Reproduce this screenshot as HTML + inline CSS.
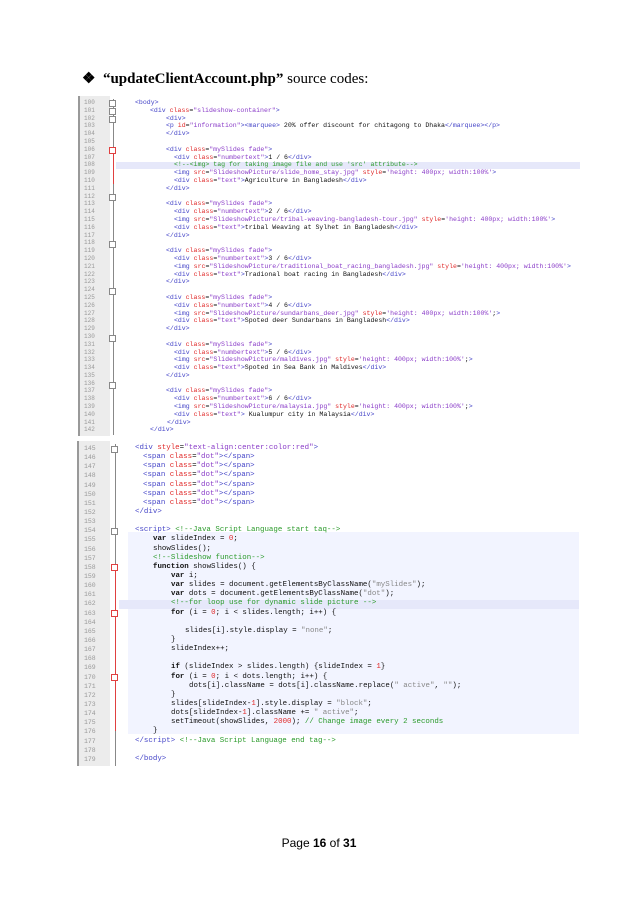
<!DOCTYPE html>
<html><head><meta charset="utf-8"><style>
body{margin:0;width:638px;height:902px;background:#fff;position:relative;overflow:hidden}
.h{position:absolute;left:82px;top:69px;font:bold 15px "Liberation Serif",serif;color:#000}
.pg{position:absolute;left:0;width:638px;top:836px;text-align:center;font:12px "Liberation Sans",sans-serif;color:#000}
.blk{position:absolute;font-family:"Liberation Mono",monospace;white-space:normal;color:#111}
.b1{left:78px;top:99px;width:502px;height:337px;font-size:6.55px;line-height:7.81px}
.b2{left:77px;top:444px;width:502px;height:322px;font-size:7.45px;line-height:9.15px}
.gut{position:absolute;top:-3px;bottom:0;left:0;width:30px;background:#ececec;border-left:2px solid #999}
.b2 .gut{width:31px}
.vl{position:absolute;width:1px;background:#888}
.rl{position:absolute;width:1px;background:#e04040}
.lines{position:absolute;left:0;top:0;right:0}
.L{position:relative;height:7.81px;overflow:visible}
.b2 .L{height:9.15px}
.n{position:absolute;left:6px;color:#999;font-size:6px;white-space:pre}
.b2 .n{left:7px;font-size:6.5px}
.c0{position:absolute;white-space:pre;top:0}
.t{color:#4646c8}.a{color:#e02a2a}.s{color:#8a3cc8}.c{color:#2a9a2a}.k{font-weight:bold;color:#111}.m{color:#e02a2a}.q{color:#888}
.hl{background:#e6e8fa}
.sb{position:absolute;left:51px;right:0;background:#f2f4ff}
.fb{position:absolute;width:5px;height:5px;border:1px solid #888;background:#fff}
.fr{border-color:#e04040}
</style></head><body>
<div class="h">❖&nbsp; “updateClientAccount.php” <span style="font-weight:normal">source codes:</span></div>

<div class="blk b1">
<div class="gut"></div>
<div class="hl" style="position:absolute;left:38px;right:0;top:62.5px;height:7.8px"></div>
<div class="vl" style="left:35px;top:0;height:336px"></div>
<div class="rl" style="left:35px;top:55px;height:30px"></div>
<div class="fb" style="left:31px;top:1px"></div><div class="fb" style="left:31px;top:9px"></div><div class="fb" style="left:31px;top:17px"></div>
<div class="fb fr" style="left:31px;top:48px"></div><div class="fb" style="left:31px;top:95px"></div><div class="fb" style="left:31px;top:142px"></div><div class="fb" style="left:31px;top:189px"></div><div class="fb" style="left:31px;top:236px"></div><div class="fb" style="left:31px;top:283px"></div>
<div class="lines">
<div class="L"><span class="n">100</span><span class="c0" style="left:57px"><span class="t">&lt;body&gt;</span></span></div>
<div class="L"><span class="n">101</span><span class="c0" style="left:72px"><span class="t">&lt;div</span> <span class="a">class</span>=<span class="s">"slideshow-container"</span><span class="t">&gt;</span></span></div>
<div class="L"><span class="n">102</span><span class="c0" style="left:88px"><span class="t">&lt;div&gt;</span></span></div>
<div class="L"><span class="n">103</span><span class="c0" style="left:88px"><span class="t">&lt;p</span> <span class="a">id</span>=<span class="s">"information"</span><span class="t">&gt;&lt;marquee&gt;</span> 20% offer discount for chitagong to Dhaka<span class="t">&lt;/marquee&gt;&lt;/p&gt;</span></span></div>
<div class="L"><span class="n">104</span><span class="c0" style="left:88px"><span class="t">&lt;/div&gt;</span></span></div>
<div class="L"><span class="n">105</span></div>
<div class="L"><span class="n">106</span><span class="c0" style="left:88px"><span class="t">&lt;div</span> <span class="a">class</span>=<span class="s">"mySlides fade"</span><span class="t">&gt;</span></span></div>
<div class="L"><span class="n">107</span><span class="c0" style="left:96px"><span class="t">&lt;div</span> <span class="a">class</span>=<span class="s">"numbertext"</span><span class="t">&gt;</span>1 / 6<span class="t">&lt;/div&gt;</span></span></div>
<div class="L"><span class="n">108</span><span class="c0 c" style="left:96px">&lt;!--&lt;img&gt; tag for taking image file and use 'src' attribute--&gt;</span></div>
<div class="L"><span class="n">109</span><span class="c0" style="left:96px"><span class="t">&lt;img</span> <span class="a">src</span>=<span class="s">"SlideshowPicture/slide_home_stay.jpg"</span> <span class="a">style</span>=<span class="s">'height: 400px; width:100%'</span><span class="t">&gt;</span></span></div>
<div class="L"><span class="n">110</span><span class="c0" style="left:96px"><span class="t">&lt;div</span> <span class="a">class</span>=<span class="s">"text"</span><span class="t">&gt;</span>Agriculture in Bangladesh<span class="t">&lt;/div&gt;</span></span></div>
<div class="L"><span class="n">111</span><span class="c0" style="left:88px"><span class="t">&lt;/div&gt;</span></span></div>
<div class="L"><span class="n">112</span></div>
<div class="L"><span class="n">113</span><span class="c0" style="left:88px"><span class="t">&lt;div</span> <span class="a">class</span>=<span class="s">"mySlides fade"</span><span class="t">&gt;</span></span></div>
<div class="L"><span class="n">114</span><span class="c0" style="left:96px"><span class="t">&lt;div</span> <span class="a">class</span>=<span class="s">"numbertext"</span><span class="t">&gt;</span>2 / 6<span class="t">&lt;/div&gt;</span></span></div>
<div class="L"><span class="n">115</span><span class="c0" style="left:96px"><span class="t">&lt;img</span> <span class="a">src</span>=<span class="s">"SlideshowPicture/tribal-weaving-bangladesh-tour.jpg"</span> <span class="a">style</span>=<span class="s">'height: 400px; width:100%'</span><span class="t">&gt;</span></span></div>
<div class="L"><span class="n">116</span><span class="c0" style="left:96px"><span class="t">&lt;div</span> <span class="a">class</span>=<span class="s">"text"</span><span class="t">&gt;</span>tribal Weaving at Sylhet in Bangladesh<span class="t">&lt;/div&gt;</span></span></div>
<div class="L"><span class="n">117</span><span class="c0" style="left:88px"><span class="t">&lt;/div&gt;</span></span></div>
<div class="L"><span class="n">118</span></div>
<div class="L"><span class="n">119</span><span class="c0" style="left:88px"><span class="t">&lt;div</span> <span class="a">class</span>=<span class="s">"mySlides fade"</span><span class="t">&gt;</span></span></div>
<div class="L"><span class="n">120</span><span class="c0" style="left:96px"><span class="t">&lt;div</span> <span class="a">class</span>=<span class="s">"numbertext"</span><span class="t">&gt;</span>3 / 6<span class="t">&lt;/div&gt;</span></span></div>
<div class="L"><span class="n">121</span><span class="c0" style="left:96px"><span class="t">&lt;img</span> <span class="a">src</span>=<span class="s">"SlideshowPicture/traditional_boat_racing_bangladesh.jpg"</span> <span class="a">style</span>=<span class="s">'height: 400px; width:100%'</span><span class="t">&gt;</span></span></div>
<div class="L"><span class="n">122</span><span class="c0" style="left:96px"><span class="t">&lt;div</span> <span class="a">class</span>=<span class="s">"text"</span><span class="t">&gt;</span>Tradional boat racing in Bangladesh<span class="t">&lt;/div&gt;</span></span></div>
<div class="L"><span class="n">123</span><span class="c0" style="left:88px"><span class="t">&lt;/div&gt;</span></span></div>
<div class="L"><span class="n">124</span></div>
<div class="L"><span class="n">125</span><span class="c0" style="left:88px"><span class="t">&lt;div</span> <span class="a">class</span>=<span class="s">"mySlides fade"</span><span class="t">&gt;</span></span></div>
<div class="L"><span class="n">126</span><span class="c0" style="left:96px"><span class="t">&lt;div</span> <span class="a">class</span>=<span class="s">"numbertext"</span><span class="t">&gt;</span>4 / 6<span class="t">&lt;/div&gt;</span></span></div>
<div class="L"><span class="n">127</span><span class="c0" style="left:96px"><span class="t">&lt;img</span> <span class="a">src</span>=<span class="s">"SlideshowPicture/sundarbans_deer.jpg"</span> <span class="a">style</span>=<span class="s">'height: 400px; width:100%'</span>;<span class="t">&gt;</span></span></div>
<div class="L"><span class="n">128</span><span class="c0" style="left:96px"><span class="t">&lt;div</span> <span class="a">class</span>=<span class="s">"text"</span><span class="t">&gt;</span>Spoted deer Sundarbans in Bangladesh<span class="t">&lt;/div&gt;</span></span></div>
<div class="L"><span class="n">129</span><span class="c0" style="left:88px"><span class="t">&lt;/div&gt;</span></span></div>
<div class="L"><span class="n">130</span></div>
<div class="L"><span class="n">131</span><span class="c0" style="left:88px"><span class="t">&lt;div</span> <span class="a">class</span>=<span class="s">"mySlides fade"</span><span class="t">&gt;</span></span></div>
<div class="L"><span class="n">132</span><span class="c0" style="left:96px"><span class="t">&lt;div</span> <span class="a">class</span>=<span class="s">"numbertext"</span><span class="t">&gt;</span>5 / 6<span class="t">&lt;/div&gt;</span></span></div>
<div class="L"><span class="n">133</span><span class="c0" style="left:96px"><span class="t">&lt;img</span> <span class="a">src</span>=<span class="s">"SlideshowPicture/maldives.jpg"</span> <span class="a">style</span>=<span class="s">'height: 400px; width:100%'</span>;<span class="t">&gt;</span></span></div>
<div class="L"><span class="n">134</span><span class="c0" style="left:96px"><span class="t">&lt;div</span> <span class="a">class</span>=<span class="s">"text"</span><span class="t">&gt;</span>Spoted in Sea Bank in Maldives<span class="t">&lt;/div&gt;</span></span></div>
<div class="L"><span class="n">135</span><span class="c0" style="left:88px"><span class="t">&lt;/div&gt;</span></span></div>
<div class="L"><span class="n">136</span></div>
<div class="L"><span class="n">137</span><span class="c0" style="left:88px"><span class="t">&lt;div</span> <span class="a">class</span>=<span class="s">"mySlides fade"</span><span class="t">&gt;</span></span></div>
<div class="L"><span class="n">138</span><span class="c0" style="left:96px"><span class="t">&lt;div</span> <span class="a">class</span>=<span class="s">"numbertext"</span><span class="t">&gt;</span>6 / 6<span class="t">&lt;/div&gt;</span></span></div>
<div class="L"><span class="n">139</span><span class="c0" style="left:96px"><span class="t">&lt;img</span> <span class="a">src</span>=<span class="s">"SlideshowPicture/malaysia.jpg"</span> <span class="a">style</span>=<span class="s">'height: 400px; width:100%'</span>;<span class="t">&gt;</span></span></div>
<div class="L"><span class="n">140</span><span class="c0" style="left:96px"><span class="t">&lt;div</span> <span class="a">class</span>=<span class="s">"text"</span><span class="t">&gt;</span> Kualumpur city in Malaysia<span class="t">&lt;/div&gt;</span></span></div>
<div class="L"><span class="n">141</span><span class="c0" style="left:89px"><span class="t">&lt;/div&gt;</span></span></div>
<div class="L"><span class="n">142</span><span class="c0" style="left:72px"><span class="t">&lt;/div&gt;</span></span></div>
</div>
</div>

<div class="blk b2">
<div class="gut"></div>
<div class="sb" style="top:88px;height:202px"></div>
<div class="hl" style="position:absolute;left:42px;right:0;top:155.5px;height:9px"></div>
<div class="vl" style="left:38px;top:0;height:322px"></div>
<div class="rl" style="left:38px;top:122px;height:165px"></div>
<div class="fb" style="left:34px;top:2px"></div><div class="fb" style="left:34px;top:84px"></div>
<div class="fb fr" style="left:34px;top:120px"></div><div class="fb fr" style="left:34px;top:166px"></div><div class="fb fr" style="left:34px;top:230px"></div>
<div class="lines">
<div class="L"><span class="n">145</span><span class="c0" style="left:58px"><span class="t">&lt;div</span> <span class="a">style</span>=<span class="s">"text-align:center:color:red"</span><span class="t">&gt;</span></span></div>
<div class="L"><span class="n">146</span><span class="c0" style="left:66px"><span class="t">&lt;span</span> <span class="a">class</span>=<span class="s">"dot"</span><span class="t">&gt;&lt;/span&gt;</span></span></div>
<div class="L"><span class="n">147</span><span class="c0" style="left:66px"><span class="t">&lt;span</span> <span class="a">class</span>=<span class="s">"dot"</span><span class="t">&gt;&lt;/span&gt;</span></span></div>
<div class="L"><span class="n">148</span><span class="c0" style="left:66px"><span class="t">&lt;span</span> <span class="a">class</span>=<span class="s">"dot"</span><span class="t">&gt;&lt;/span&gt;</span></span></div>
<div class="L"><span class="n">149</span><span class="c0" style="left:66px"><span class="t">&lt;span</span> <span class="a">class</span>=<span class="s">"dot"</span><span class="t">&gt;&lt;/span&gt;</span></span></div>
<div class="L"><span class="n">150</span><span class="c0" style="left:66px"><span class="t">&lt;span</span> <span class="a">class</span>=<span class="s">"dot"</span><span class="t">&gt;&lt;/span&gt;</span></span></div>
<div class="L"><span class="n">151</span><span class="c0" style="left:66px"><span class="t">&lt;span</span> <span class="a">class</span>=<span class="s">"dot"</span><span class="t">&gt;&lt;/span&gt;</span></span></div>
<div class="L"><span class="n">152</span><span class="c0" style="left:58px"><span class="t">&lt;/div&gt;</span></span></div>
<div class="L"><span class="n">153</span></div>
<div class="L"><span class="n">154</span><span class="c0" style="left:58px"><span class="t">&lt;script&gt;</span> <span class="c">&lt;!--Java Script Language start taq--&gt;</span></span></div>
<div class="L"><span class="n">155</span><span class="c0" style="left:76px"><span class="k">var</span> slideIndex = <span class="m">0</span>;</span></div>
<div class="L"><span class="n">156</span><span class="c0" style="left:76px">showSlides();</span></div>
<div class="L"><span class="n">157</span><span class="c0 c" style="left:76px">&lt;!--Slideshow function--&gt;</span></div>
<div class="L"><span class="n">158</span><span class="c0" style="left:76px"><span class="k">function</span> showSlides() {</span></div>
<div class="L"><span class="n">159</span><span class="c0" style="left:94px"><span class="k">var</span> i;</span></div>
<div class="L"><span class="n">160</span><span class="c0" style="left:94px"><span class="k">var</span> slides = document.getElementsByClassName(<span class="q">"mySlides"</span>);</span></div>
<div class="L"><span class="n">161</span><span class="c0" style="left:94px"><span class="k">var</span> dots = document.getElementsByClassName(<span class="q">"dot"</span>);</span></div>
<div class="L"><span class="n">162</span><span class="c0 c" style="left:94px">&lt;!--for loop use for dynamic slide picture --&gt;</span></div>
<div class="L"><span class="n">163</span><span class="c0" style="left:94px"><span class="k">for</span> (i = <span class="m">0</span>; i &lt; slides.length; i++) {</span></div>
<div class="L"><span class="n">164</span></div>
<div class="L"><span class="n">165</span><span class="c0" style="left:108px">slides[i].style.display = <span class="q">"none"</span>;</span></div>
<div class="L"><span class="n">166</span><span class="c0" style="left:94px">}</span></div>
<div class="L"><span class="n">167</span><span class="c0" style="left:94px">slideIndex++;</span></div>
<div class="L"><span class="n">168</span></div>
<div class="L"><span class="n">169</span><span class="c0" style="left:94px"><span class="k">if</span> (slideIndex &gt; slides.length) {slideIndex = <span class="m">1</span>}</span></div>
<div class="L"><span class="n">170</span><span class="c0" style="left:94px"><span class="k">for</span> (i = <span class="m">0</span>; i &lt; dots.length; i++) {</span></div>
<div class="L"><span class="n">171</span><span class="c0" style="left:112px">dots[i].className = dots[i].className.replace(<span class="q">" active"</span>, <span class="q">""</span>);</span></div>
<div class="L"><span class="n">172</span><span class="c0" style="left:94px">}</span></div>
<div class="L"><span class="n">173</span><span class="c0" style="left:94px">slides[slideIndex-<span class="m">1</span>].style.display = <span class="q">"block"</span>;</span></div>
<div class="L"><span class="n">174</span><span class="c0" style="left:94px">dots[slideIndex-<span class="m">1</span>].className += <span class="q">" active"</span>;</span></div>
<div class="L"><span class="n">175</span><span class="c0" style="left:94px">setTimeout(showSlides, <span class="m">2000</span>); <span class="c">// Change image every 2 seconds</span></span></div>
<div class="L"><span class="n">176</span><span class="c0" style="left:76px">}</span></div>
<div class="L"><span class="n">177</span><span class="c0" style="left:58px"><span class="t">&lt;/script&gt;</span> <span class="c">&lt;!--Java Script Language end tag--&gt;</span></span></div>
<div class="L"><span class="n">178</span></div>
<div class="L"><span class="n">179</span><span class="c0" style="left:58px"><span class="t">&lt;/body&gt;</span></span></div>
</div>
</div>

<div class="pg">Page <b>16</b> of <b>31</b></div>
</body></html>
